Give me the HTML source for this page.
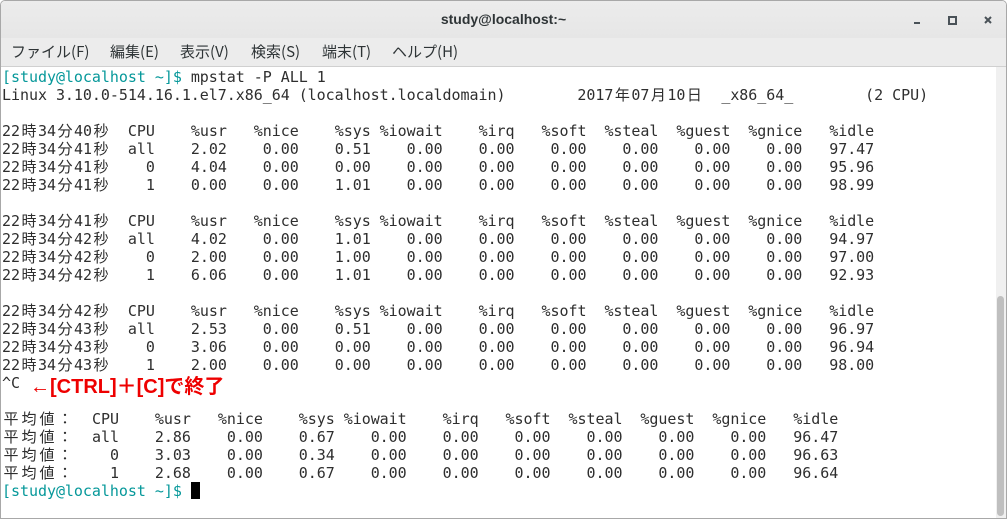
<!DOCTYPE html>
<html><head><meta charset="utf-8"><style>
body{margin:0;width:1007px;height:519px;overflow:hidden;background:#fff;font-family:"Liberation Sans","Noto Sans CJK JP",sans-serif}
.win{position:absolute;left:0;top:0;width:1005px;height:517px;border:1px solid #a8a8a8;border-radius:5px 5px 0 0;overflow:hidden;background:#fff}
.title{position:absolute;left:0;top:0;width:1005px;height:37px;background:linear-gradient(#ececec,#e6e6e6);}
.title .t{position:absolute;left:0;width:1005px;top:10px;text-align:center;font-weight:bold;font-size:14px;color:#2e3436}
.menu{position:absolute;left:0;top:37px;width:1005px;height:28px;background:#ececec;border-bottom:1px solid #d0d0d0;font-size:15px;color:#2e3436;font-family:"Noto Sans CJK JP",sans-serif}
.menu span{position:absolute;top:3px}
.term{position:absolute;left:1px;top:67px;margin:0;font-family:"DejaVu Sans Mono","Liberation Mono","Noto Sans CJK JP",monospace;font-size:15px;line-height:18px;color:#2e2e2e;white-space:pre;letter-spacing:-0.04px}
.w{display:inline-block;width:18px;text-align:center;font-family:"Noto Sans CJK JP",sans-serif;font-size:15px;line-height:18px;vertical-align:top;letter-spacing:0}
.p{color:#06989a}
.cur{display:inline-block;width:9px;height:17px;background:#000;vertical-align:top}
.sb{position:absolute;left:995px;top:66px;width:10px;height:451px;background:#f0f0f0}
.th{position:absolute;left:996px;top:295px;width:7px;height:220px;background:#bfbfbf;border-radius:4px}
.red{position:absolute;left:29px;top:369px;color:#e00;font-weight:bold;font-size:20px;font-family:"Liberation Sans","Noto Sans CJK JP",sans-serif}
</style></head><body><div class="win">
<div class="title"><div class="t">study@localhost:~</div>
<svg style="position:absolute;left:910px;top:13px" width="90" height="14"><rect x="3" y="8" width="6" height="2" fill="#4a5258"/><rect x="38" y="3" width="7" height="7" fill="none" stroke="#4a5258" stroke-width="2"/><path d="M74 3l6 6M80 3l-6 6" stroke="#4a5258" stroke-width="2"/></svg></div>
<div class="menu"><span style="left:10px">ファイル(F)</span><span style="left:109px">編集(E)</span><span style="left:179px">表示(V)</span><span style="left:250px">検索(S)</span><span style="left:321px">端末(T)</span><span style="left:391px">ヘルプ(H)</span></div>
<pre class="term"><span class="p">[study@localhost ~]$</span> mpstat -P ALL 1
Linux 3.10.0-514.16.1.el7.x86_64 (localhost.localdomain)        2017<span class="w">年</span>07<span class="w">月</span>10<span class="w">日</span>  _x86_64_        (2 CPU)

22<span class="w">時</span>34<span class="w">分</span>40<span class="w">秒</span>  CPU    %usr   %nice    %sys %iowait    %irq   %soft  %steal  %guest  %gnice   %idle
22<span class="w">時</span>34<span class="w">分</span>41<span class="w">秒</span>  all    2.02    0.00    0.51    0.00    0.00    0.00    0.00    0.00    0.00   97.47
22<span class="w">時</span>34<span class="w">分</span>41<span class="w">秒</span>    0    4.04    0.00    0.00    0.00    0.00    0.00    0.00    0.00    0.00   95.96
22<span class="w">時</span>34<span class="w">分</span>41<span class="w">秒</span>    1    0.00    0.00    1.01    0.00    0.00    0.00    0.00    0.00    0.00   98.99

22<span class="w">時</span>34<span class="w">分</span>41<span class="w">秒</span>  CPU    %usr   %nice    %sys %iowait    %irq   %soft  %steal  %guest  %gnice   %idle
22<span class="w">時</span>34<span class="w">分</span>42<span class="w">秒</span>  all    4.02    0.00    1.01    0.00    0.00    0.00    0.00    0.00    0.00   94.97
22<span class="w">時</span>34<span class="w">分</span>42<span class="w">秒</span>    0    2.00    0.00    1.00    0.00    0.00    0.00    0.00    0.00    0.00   97.00
22<span class="w">時</span>34<span class="w">分</span>42<span class="w">秒</span>    1    6.06    0.00    1.01    0.00    0.00    0.00    0.00    0.00    0.00   92.93

22<span class="w">時</span>34<span class="w">分</span>42<span class="w">秒</span>  CPU    %usr   %nice    %sys %iowait    %irq   %soft  %steal  %guest  %gnice   %idle
22<span class="w">時</span>34<span class="w">分</span>43<span class="w">秒</span>  all    2.53    0.00    0.51    0.00    0.00    0.00    0.00    0.00    0.00   96.97
22<span class="w">時</span>34<span class="w">分</span>43<span class="w">秒</span>    0    3.06    0.00    0.00    0.00    0.00    0.00    0.00    0.00    0.00   96.94
22<span class="w">時</span>34<span class="w">分</span>43<span class="w">秒</span>    1    2.00    0.00    0.00    0.00    0.00    0.00    0.00    0.00    0.00   98.00
^C

<span class="w">平</span><span class="w">均</span><span class="w">値</span><span class="w">：</span>  CPU    %usr   %nice    %sys %iowait    %irq   %soft  %steal  %guest  %gnice   %idle
<span class="w">平</span><span class="w">均</span><span class="w">値</span><span class="w">：</span>  all    2.86    0.00    0.67    0.00    0.00    0.00    0.00    0.00    0.00   96.47
<span class="w">平</span><span class="w">均</span><span class="w">値</span><span class="w">：</span>    0    3.03    0.00    0.34    0.00    0.00    0.00    0.00    0.00    0.00   96.63
<span class="w">平</span><span class="w">均</span><span class="w">値</span><span class="w">：</span>    1    2.68    0.00    0.67    0.00    0.00    0.00    0.00    0.00    0.00   96.64
<span class="p">[study@localhost ~]$</span> <span class="cur"></span></pre>
<div class="red">←[CTRL]＋[C]で終了</div>
<div class="sb"></div><div class="th"></div>
</div></body></html>
